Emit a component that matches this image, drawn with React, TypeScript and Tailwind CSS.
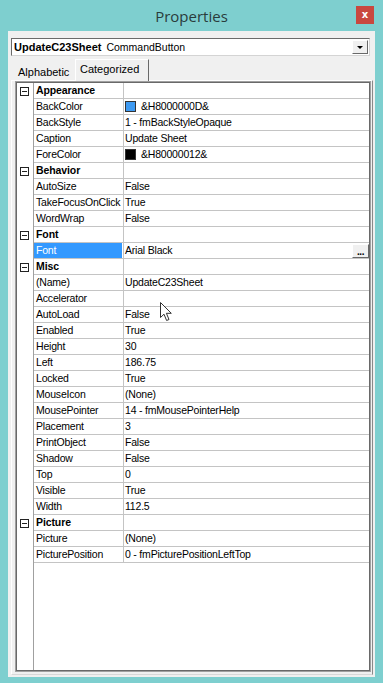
import React from "react";

type Row = {
  cat?: string;
  name?: string;
  value?: string;
  swatch?: string;
  selected?: boolean;
  btn?: boolean;
};

const rows: Row[] = [
  { cat: "Appearance" },
  { name: "BackColor", value: "&H8000000D&", swatch: "#3d9af2" },
  { name: "BackStyle", value: "1 - fmBackStyleOpaque" },
  { name: "Caption", value: "Update Sheet" },
  { name: "ForeColor", value: "&H80000012&", swatch: "#000000" },
  { cat: "Behavior" },
  { name: "AutoSize", value: "False" },
  { name: "TakeFocusOnClick", value: "True" },
  { name: "WordWrap", value: "False" },
  { cat: "Font" },
  { name: "Font", value: "Arial Black", selected: true, btn: true },
  { cat: "Misc" },
  { name: "(Name)", value: "UpdateC23Sheet" },
  { name: "Accelerator", value: "" },
  { name: "AutoLoad", value: "False" },
  { name: "Enabled", value: "True" },
  { name: "Height", value: "30" },
  { name: "Left", value: "186.75" },
  { name: "Locked", value: "True" },
  { name: "MouseIcon", value: "(None)" },
  { name: "MousePointer", value: "14 - fmMousePointerHelp" },
  { name: "Placement", value: "3" },
  { name: "PrintObject", value: "False" },
  { name: "Shadow", value: "False" },
  { name: "Top", value: "0" },
  { name: "Visible", value: "True" },
  { name: "Width", value: "112.5" },
  { cat: "Picture" },
  { name: "Picture", value: "(None)" },
  { name: "PicturePosition", value: "0 - fmPicturePositionLeftTop" },
];

function MinusBox() {
  return (
    <div className="w-[9px] h-[9px] border border-[#222] bg-white flex items-center justify-center">
      <div className="w-[5px] h-[1px] bg-[#222]" />
    </div>
  );
}

function GridRow({ r }: { r: Row }) {
  return (
    <div className="flex h-[16px]">
      <div className="w-[17px] shrink-0 border-r border-[#a0a0a0] flex items-center pl-[3px]">
        {r.cat && <MinusBox />}
      </div>
      <div className="flex flex-1 border-b border-[#c4c4c4]">
        <div className="w-[90px] shrink-0 border-r border-[#c4c4c4] flex items-center pl-[1px]">
          {r.cat ? (
            <span className="font-bold text-black leading-none pl-[1px] tracking-[-0.1px]">{r.cat}</span>
          ) : r.selected ? (
            <span className="h-full w-full bg-[#3399ff] text-white flex items-center pl-[2px] -ml-[1px] leading-none">
              {r.name}
            </span>
          ) : (
            <span className="text-black leading-none pl-[1px] whitespace-nowrap">{r.name}</span>
          )}
        </div>
        <div className="flex-1 flex items-center pl-[1px] min-w-0">
          {r.swatch && (
            <span
              className={
                r.swatch === "#000000"
                  ? "w-[11px] h-[11px] bg-black border border-[#333] shrink-0 mr-[5px]"
                  : "w-[11px] h-[11px] bg-[#3d9af2] border border-[#333] shrink-0 mr-[5px]"
              }
            />
          )}
          <span className="text-black leading-none whitespace-nowrap flex-1">{r.value}</span>
          {r.btn && (
            <div className="w-[17px] h-[14px] bg-[#f0f0f0] border-t border-l border-white border-r border-b border-r-[#696969] border-b-[#696969] flex items-end justify-center shrink-0">
              <span className="text-[10px] font-bold leading-[10px] text-black tracking-[-0.5px]">...</span>
            </div>
          )}
        </div>
      </div>
    </div>
  );
}

export default function App() {
  return (
    <div className="relative w-[383px] h-[683px] bg-[#7ecfcf] overflow-hidden font-['Liberation_Sans',Arial,sans-serif]">
      {/* Title bar */}
      <div className="h-[31px] flex items-center justify-center">
        <span className="font-['Open_Sans',sans-serif] text-[15px] text-[#2a3c3c] leading-none pt-[1px]">
          Properties
        </span>
      </div>
      <div className="absolute left-[356px] top-[6px] w-[18px] h-[18px] bg-[#c9473f] flex items-center justify-center">
        <span className="text-white text-[10px] font-bold leading-none font-['DejaVu_Sans',sans-serif]">x</span>
      </div>

      {/* Panel */}
      <div className="mx-[8px] h-[646px] bg-[#f0f0f0] flex flex-col pt-[7px]">
        {/* Dropdown */}
        <div className="ml-[3px] mr-[5px] h-[18px] bg-white border border-t-[#6b6b6b] border-l-[#6b6b6b] border-r-[#d4d4d4] border-b-[#d4d4d4] flex items-center">
          <div className="flex-1 flex items-center pl-[2px] text-[11px] text-black leading-none whitespace-nowrap">
            <span className="font-bold">UpdateC23Sheet</span>
            <span className="ml-[5px] text-[10.5px]">CommandButton</span>
          </div>
          <div className="w-[16px] h-[14px] mr-[1px] bg-[#f0f0f0] border border-t-white border-l-white border-r-[#696969] border-b-[#696969] flex items-center justify-center">
            <div className="w-0 h-0 border-l-[3px] border-r-[3px] border-t-[3px] border-l-transparent border-r-transparent border-t-black mt-[1px]" />
          </div>
        </div>

        {/* Tabs */}
        <div className="flex items-end h-[22px] mt-[2px] pl-[6px] text-[11px] leading-none text-black">
          <div className="h-[19px] w-[61px] flex items-center pl-[4px] pt-[3px]">Alphabetic</div>
          <div className="h-[22px] w-[74px] border-t border-l border-r border-t-white border-l-white border-r-[#696969] flex items-center pl-[4px] pb-[3px] relative -mb-[1px] bg-[#f0f0f0] z-10">
            Categorized
          </div>
        </div>

        {/* Tab body */}
        <div className="ml-[3px] mr-[2px] h-[595px] border-t border-l border-t-white border-l-white border-r border-b border-r-[#8a8a8a] border-b-[#d8d8d8] pl-[3px] pr-[1px] pb-[2px] flex flex-col">
          <div className="flex-1 border border-[#a0a0a0] flex flex-col">
            <div className="flex-1 border border-[#696969] bg-white flex flex-col text-[10.5px] tracking-[-0.2px]">
              {rows.map((r, i) => (
                <GridRow key={i} r={r} />
              ))}
              <div className="flex-1 flex">
                <div className="w-[17px] shrink-0 border-r border-[#a0a0a0]" />
              </div>
            </div>
          </div>
        </div>
      </div>

      {/* Mouse cursor */}
      <svg
        className="absolute left-[160px] top-[302px]"
        width="13"
        height="20"
        viewBox="0 0 13 20"
      >
        <path
          d="M0.5 0.5 L0.5 15.5 L4 12.2 L6.6 18.5 L9 17.5 L6.4 11.3 L11.3 11.3 Z"
          fill="#ffffff"
          stroke="#333"
          strokeWidth="1"
          strokeLinejoin="miter"
        />
      </svg>
    </div>
  );
}
